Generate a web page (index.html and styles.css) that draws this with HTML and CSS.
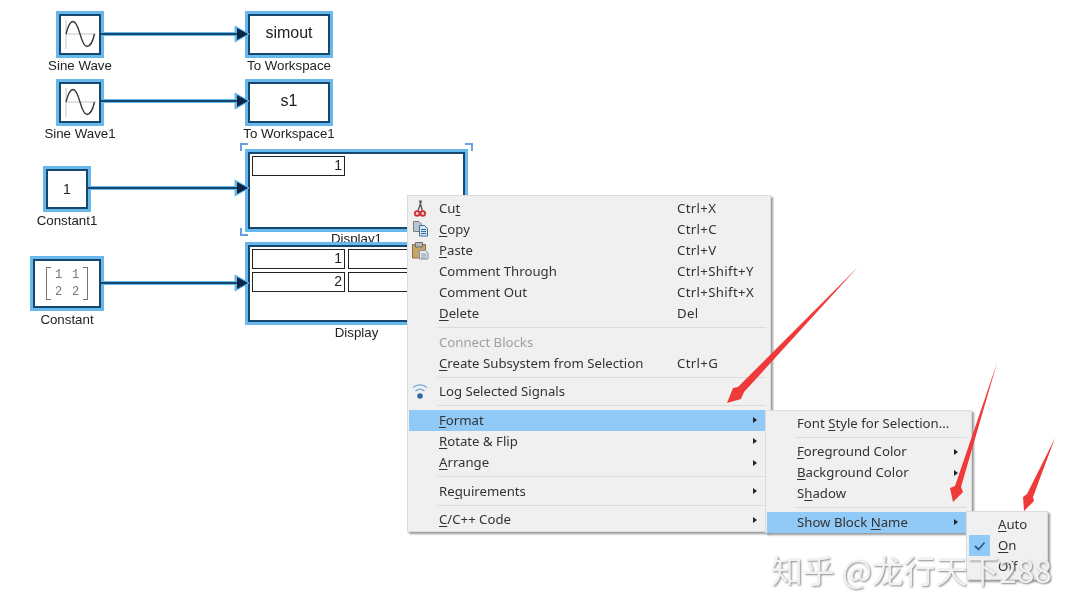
FILE: index.html
```html
<!DOCTYPE html>
<html lang="en">
<head>
<meta charset="utf-8">
<title>Simulink context menu</title>
<link rel="stylesheet" href="styles.css">
</head>
<body>
<main class="canvas">
  <div class="node n-sine">
    <div class="block sine-box">
      <svg class="sine" viewBox="0 0 38 37" width="38" height="37"><path class="axis" d="M5 4V33M5 18H35"/><path class="curve" d="M5 18C7 10 9 5.500 12 5.500C15 5.500 17 11 19 18C21 25 23 30.500 26 30.500C29 30.500 32 25 33.500 18"/></svg>
    </div>
    <div class="name">Sine Wave</div>
  </div>
  <div class="node n-ws">
    <div class="block ws-box">simout</div>
    <div class="name">To Workspace</div>
  </div>
  <div class="node n-sine1">
    <div class="block sine-box">
      <svg class="sine" viewBox="0 0 38 37" width="38" height="37"><path class="axis" d="M5 4V33M5 18H35"/><path class="curve" d="M5 18C7 10 9 5.500 12 5.500C15 5.500 17 11 19 18C21 25 23 30.500 26 30.500C29 30.500 32 25 33.500 18"/></svg>
    </div>
    <div class="name">Sine Wave1</div>
  </div>
  <div class="node n-ws1">
    <div class="block ws-box">s1</div>
    <div class="name">To Workspace1</div>
  </div>
  <div class="node n-const1">
    <div class="block const1-box">1</div>
    <div class="name name-low">Constant1</div>
  </div>
  <div class="node n-const">
    <div class="block const-box">
      <div class="matrix"><span>1</span><span>1</span><span>2</span><span>2</span></div>
    </div>
    <div class="name name-low">Constant</div>
  </div>
  <div class="node n-disp1">
    <div class="block disp-box">
      <div class="cells"><div class="cell">1</div></div>
    </div>
    <div class="name name-tight">Display1</div>
    <i class="corner c-tl"></i><i class="corner c-tr"></i><i class="corner c-bl"></i><i class="corner c-br"></i>
  </div>
  <div class="node n-disp">
    <div class="block disp-box">
      <div class="cells"><div class="cell">1</div><div class="cell"></div><div class="cell">2</div><div class="cell"></div></div>
    </div>
    <div class="name">Display</div>
  </div>

  <svg class="wires" viewBox="0 0 1080 615" width="1080" height="615">
    <g class="wire-glow">
      <path d="M103 34H238M103 101H238M90 188H238M103 283H238"/>
      <path d="M235 26L249 34L235 42ZM235 93L249 101L235 109ZM235 180L249 188L235 196ZM235 275L249 283L235 291Z"/>
    </g>
    <g class="wire">
      <path d="M101 34H238M101 101H238M88 188H238M101 283H238"/>
    </g>
    <path class="head" d="M237 28L248 34L237 40ZM237 95L248 101L237 107ZM237 182L248 188L237 194ZM237 277L248 283L237 289Z"/>
  </svg>

  <nav class="menu menu-main">
    <div class="item"><span class="ico"><svg viewBox="0 0 16 17" width="16" height="17"><path class="blade" d="M6 11L9.500 .5M10.500 11L7.500 .5"/><circle class="ring" cx="5.200" cy="13.500" r="2.300"/><circle class="ring" cx="10.800" cy="13.500" r="2.300"/></svg></span><span class="label">Cu<u>t</u></span><span class="key">Ctrl+X</span></div>
    <div class="item"><span class="ico"><svg viewBox="0 0 16 16" width="16" height="16"><path class="doc-back" d="M1.500 .5H7L9.500 3V10.500H1.500Z"/><path class="doc-front" d="M7.500 4.500H12.500L15.500 7.500V15H7.500Z"/><path class="doc-lines" d="M9 8.500H14M9 10.500H14M9 12.500H14"/></svg></span><span class="label"><u>C</u>opy</span><span class="key">Ctrl+C</span></div>
    <div class="item"><span class="ico"><svg viewBox="0 0 17 18" width="17" height="18"><path class="board" d="M.5 2.500H13.500V16H.5Z"/><path class="clip" d="M3.500 .5H10.500V5H3.500Z"/><path class="sheet" d="M7.500 8.500H13.500L16 11V17H7.500Z"/><path class="sheet-lines" d="M9 12H14.500M9 14H14.500M9 16H14.500"/></svg></span><span class="label"><u>P</u>aste</span><span class="key">Ctrl+V</span></div>
    <div class="item"><span class="ico"></span><span class="label">Comment Through</span><span class="key">Ctrl+Shift+Y</span></div>
    <div class="item"><span class="ico"></span><span class="label">Comment Out</span><span class="key">Ctrl+Shift+X</span></div>
    <div class="item"><span class="ico"></span><span class="label"><u>D</u>elete</span><span class="key">Del</span></div>
    <div class="sep"></div>
    <div class="item off"><span class="ico"></span><span class="label">Connect Blocks</span></div>
    <div class="item"><span class="ico"></span><span class="label"><u>C</u>reate Subsystem from Selection</span><span class="key">Ctrl+G</span></div>
    <div class="sep"></div>
    <div class="item"><span class="ico"><svg viewBox="0 0 16 18" width="16" height="18"><path class="arc" d="M1 4.500C5 1 11 1 15 4.500"/><path class="arc" d="M3.500 8C6.500 5.500 9.500 5.500 12.500 8"/><circle class="dot" cx="8" cy="13" r="2.800"/></svg></span><span class="label">Log Selected Signals</span></div>
    <div class="sep"></div>
    <div class="item on"><span class="ico"></span><span class="label"><u>F</u>ormat</span><b class="tri"></b></div>
    <div class="item"><span class="ico"></span><span class="label"><u>R</u>otate &amp; Flip</span><b class="tri"></b></div>
    <div class="item"><span class="ico"></span><span class="label"><u>A</u>rrange</span><b class="tri"></b></div>
    <div class="sep"></div>
    <div class="item"><span class="ico"></span><span class="label">Re<u>q</u>uirements</span><b class="tri"></b></div>
    <div class="sep"></div>
    <div class="item"><span class="ico"></span><span class="label"><u>C</u>/C++ Code</span><b class="tri"></b></div>
  </nav>

  <nav class="menu menu-sub">
    <div class="item"><span class="ico"></span><span class="label">Font <u>S</u>tyle for Selection...</span></div>
    <div class="sep"></div>
    <div class="item"><span class="ico"></span><span class="label"><u>F</u>oreground Color</span><b class="tri"></b></div>
    <div class="item"><span class="ico"></span><span class="label"><u>B</u>ackground Color</span><b class="tri"></b></div>
    <div class="item"><span class="ico"></span><span class="label">S<u>h</u>adow</span></div>
    <div class="sep"></div>
    <div class="item on"><span class="ico"></span><span class="label">Show Block <u>N</u>ame</span><b class="tri"></b></div>
  </nav>

  <nav class="menu menu-name">
    <div class="item"><span class="ico"></span><span class="label"><u>A</u>uto</span></div>
    <div class="item"><span class="ico check"><svg viewBox="0 0 21 21" width="21" height="21"><path class="tick" d="M6 11L9.500 14.500L15.500 7.500"/></svg></span><span class="label"><u>O</u>n</span></div>
    <div class="item"><span class="ico"></span><span class="label">Off</span></div>
  </nav>

  <svg class="arrows" viewBox="0 0 1080 615" width="1080" height="615">
    <path d="M858 267L744 392L741 399L727 403L733 388L738 387Z"/>
    <path d="M997 363L961 487L963 492L953 502L950 488L955 486Z"/>
    <path d="M1055 438L1033 497L1034 501L1024 511L1023 497L1027 494Z"/>
  </svg>

  <div class="mark">知乎 @龙行天下288</div>
</main>
</body>
</html>
```

FILE: styles.css
```css
html, body {
  margin: 0;
  padding: 0;
  background: #fff;
}

.canvas {
  position: relative;
  width: 1080px;
  height: 615px;
  overflow: hidden;
  background: #fff;
  font-family: "Liberation Sans", Arial, sans-serif;
  filter: blur(0.35px);
}

/* Diagram nodes sit on a free canvas */
.node {
  position: absolute;
  display: flex;
  flex-direction: column;
  align-items: center;
}
.n-sine   { left: 59px;  top: 14px;  width: 42px; }
.n-ws     { left: 248px; top: 14px;  width: 82px; }
.n-sine1  { left: 59px;  top: 82px;  width: 42px; }
.n-ws1    { left: 248px; top: 82px;  width: 82px; }
.n-const1 { left: 46px;  top: 169px; width: 42px; }
.n-const  { left: 33px;  top: 259px; width: 68px; }
.n-disp1  { left: 248px; top: 152px; width: 217px; }
.n-disp   { left: 248px; top: 245px; width: 217px; }

.block {
  box-sizing: border-box;
  flex: none;
  display: flex;
  align-items: center;
  justify-content: center;
  background: #fff;
  border: 2px solid #15476f;
  box-shadow: 0 0 0 3px #68b8ec;
  color: #222;
}
.sine-box   { width: 42px;  height: 41px; }
.ws-box     { width: 82px;  height: 41px; font-size: 16px; padding-bottom: 3px; }
.const1-box { width: 42px;  height: 40px; font-size: 14px; }
.const-box  { width: 68px;  height: 49px; }
.disp-box   {
  width: 217px;
  height: 77px;
  align-items: flex-start;
  justify-content: flex-start;
  padding: 2px;
}

.name {
  flex: none;
  margin-top: 4px;
  font-size: 13.300px;
  line-height: 14px;
  color: #222;
  white-space: nowrap;
}
.name-tight { margin-top: 3px; }
.name-low { margin-top: 5px; }

.sine .axis {
  fill: none;
  stroke: #c4c4c4;
  stroke-width: 1;
}
.sine .curve {
  fill: none;
  stroke: #333;
  stroke-width: 1.300;
}

.matrix {
  box-sizing: border-box;
  width: 42px;
  height: 33px;
  display: grid;
  grid-template-columns: 1fr 1fr;
  align-items: center;
  justify-items: center;
  border-left: 1px solid #777;
  border-right: 1px solid #777;
  font-family: "Liberation Mono", monospace;
  font-size: 12px;
  color: #777;
  background:
    linear-gradient(#777, #777) left top / 4px 1px no-repeat,
    linear-gradient(#777, #777) right top / 4px 1px no-repeat,
    linear-gradient(#777, #777) left bottom / 4px 1px no-repeat,
    linear-gradient(#777, #777) right bottom / 4px 1px no-repeat;
  padding: 0 3px;
}

.cells {
  display: grid;
  grid-template-columns: 93px 93px;
  column-gap: 3px;
  row-gap: 3px;
}
.cell {
  box-sizing: border-box;
  height: 20px;
  border: 1px solid #222;
  background: #fff;
  padding-right: 2px;
  text-align: right;
  font-size: 14px;
  line-height: 16px;
  color: #222;
}

/* Selection handles hang over the corners of the block */
.corner {
  position: absolute;
  width: 6px;
  height: 6px;
  border: 0 solid #6a9fe0;
}
.c-tl { left: -8px;  top: -9px;  border-width: 2px 0 0 2px; }
.c-tr { right: -8px; top: -9px;  border-width: 2px 2px 0 0; }
.c-bl { left: -8px;  top: 76px;  border-width: 0 0 2px 2px; }
.c-br { right: -8px; top: 76px;  border-width: 0 2px 2px 0; }

.wires, .arrows {
  position: absolute;
  left: 0;
  top: 0;
}
.wire-glow path:first-child {
  fill: none;
  stroke: #68b8ec;
  stroke-width: 4;
}
.wire-glow path:last-child {
  fill: #68b8ec;
  stroke: #68b8ec;
  stroke-width: 1;
}
.wire path {
  fill: none;
  stroke: #15476f;
  stroke-width: 2;
}
.head { fill: #0b2545; }

/* Context menus overlay the diagram */
.menu {
  position: absolute;
  box-sizing: border-box;
  display: flex;
  flex-direction: column;
  background: #f0f0f0;
  border: 1px solid #dcdcdc;
  box-shadow: 2px 2px 2px #999;
  font-family: "Noto Sans", "Open Sans", sans-serif;
  font-size: 13.200px;
  color: #333;
}
.menu-main {
  left: 407px;
  top: 195px;
  width: 364px;
  height: 337px;
  padding: 1.800px 1px 0;
}
.menu-sub {
  left: 765px;
  top: 410px;
  width: 207px;
  height: 123px;
  padding: 1.500px 1px 0;
}
.menu-name {
  left: 966px;
  top: 511px;
  width: 82px;
  height: 69px;
  padding: 1.500px 1px 0;
}

.item {
  flex: none;
  display: flex;
  align-items: center;
  height: 21.100px;
  line-height: 21px;
  white-space: nowrap;
}
.ico {
  flex: none;
  box-sizing: border-box;
  width: 30px;
  height: 21px;
  display: flex;
  align-items: center;
  padding-left: 3px;
}
.label { width: 238px; flex: none; }
.menu-sub .label, .menu-name .label { width: auto; flex: 1; }
.key { flex: none; letter-spacing: .35px; }
.tri {
  flex: none;
  width: 0;
  height: 0;
  margin-left: auto;
  margin-right: 12px;
  border-left: 4px solid #222;
  border-top: 3px solid transparent;
  border-bottom: 3px solid transparent;
}
.on { background: #91c9f7; }
.off { color: #a0a0a0; }
.sep {
  flex: none;
  box-sizing: border-box;
  height: 7.400px;
  margin: 0 3px 0 28px;
  padding-top: 3px;
}
.sep::before {
  content: "";
  display: block;
  height: 1px;
  background: #dcdcdc;
}
.menu u { text-underline-offset: 2px; }

.check {
  padding-left: 0;
  width: 21px;
  height: 21px;
  margin-left: 1px;
  margin-right: 8px;
  background: #91c9f7;
}
.tick {
  fill: none;
  stroke: #2c5f8a;
  stroke-width: 1.800;
}

.blade { fill: none; stroke: #5a5a5a; stroke-width: 1.400; }
.ring { fill: #f3d0d0; stroke: #cc2e3a; stroke-width: 1.800; }
.doc-back { fill: #b9c4d0; stroke: #76828e; stroke-width: 1; }
.doc-front { fill: #dbe6f2; stroke: #3a6f9f; stroke-width: 1; }
.doc-lines { fill: none; stroke: #2f6aa0; stroke-width: 1; }
.board { fill: #c9a468; stroke: #8d6e3c; stroke-width: 1; }
.clip { fill: #b8b8b8; stroke: #6d6d6d; stroke-width: 1; }
.sheet { fill: #e6e9ee; stroke: #8793a0; stroke-width: 1; }
.sheet-lines { fill: none; stroke: #8a97a6; stroke-width: 1; }
.arc { fill: none; stroke: #6fa9d8; stroke-width: 1.400; }
.dot { fill: #2f6ca6; }

.arrows path { fill: #ee3a3a; }

.mark {
  position: absolute;
  left: 771px;
  top: 547px;
  font-family: "Noto Sans CJK SC", "Liberation Sans", sans-serif;
  font-size: 31.800px;
  line-height: 44px;
  color: #f1f1f1;
  text-shadow: 1px 1px 2px #888;
  white-space: nowrap;
}
```
